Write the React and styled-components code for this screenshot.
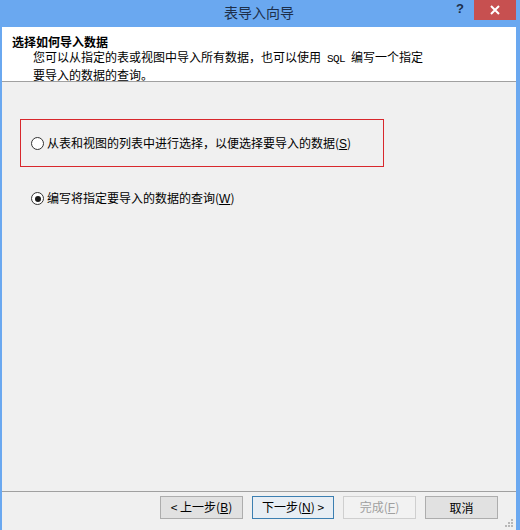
import { createGlobalStyle, styled } from "styled-components";

const Global = createGlobalStyle`
	html, body {
		margin: 0;
		padding: 0;
		background: #6aa8f0;
	}
	* {
		box-sizing: border-box;
	}
`;

const Window = styled.div`
	width: 520px;
	height: 530px;
	display: flex;
	flex-direction: column;
	background: #6aa8f0;
	padding: 0 4px 0 2px;
	font-family: "Noto Sans CJK SC", "Liberation Sans", sans-serif;
	font-size: 12px;
	color: #000;
`;

const TitleBar = styled.div`
	height: 27px;
	flex-shrink: 0;
	display: flex;
	align-items: flex-start;
	justify-content: center;
	position: relative;
	padding-top: 2px;
`;

const Title = styled.div`
	font-size: 14px;
	color: #1d2f4a;
	line-height: 20px;
`;

const Help = styled.div`
	position: absolute;
	top: 1px;
	right: 52px;
	font-family: "Liberation Sans", sans-serif;
	font-weight: bold;
	font-size: 13px;
	color: #1d2f4a;
`;

const Close = styled.div`
	position: absolute;
	top: 0;
	right: 0;
	width: 42px;
	height: 20px;
	background: #c75050;
	display: flex;
	align-items: center;
	justify-content: center;
`;

const Client = styled.div`
	flex: 1;
	display: flex;
	flex-direction: column;
	background: #f0f0f0;
`;

const Header = styled.div`
	height: 55px;
	flex-shrink: 0;
	background: #fff;
	border-bottom: 1px solid #a0a0a0;
	padding: 7px 0 0 10px;
	line-height: 15px;
`;

const HeaderTitle = styled.div`
	font-weight: bold;
`;

const HeaderText = styled.div`
	padding-left: 21px;
`;

const Mono = styled.span`
	font-family: "Liberation Mono", monospace;
	font-size: 11px;
	letter-spacing: -0.6px;
	white-space: pre;
`;

const Body = styled.div`
	flex: 1;
	padding: 37px 0 0 18px;
	display: flex;
	flex-direction: column;
	gap: 24px;
`;

const Highlight = styled.div`
	width: 364px;
	height: 48px;
	border: 1px solid #d8272c;
	display: flex;
	align-items: center;
	padding-left: 10px;
`;

const Option = styled.label`
	display: flex;
	align-items: center;
	gap: 3px;
	padding-left: ${(p) => (p.$inset ? "11px" : "0")};
	line-height: 14px;
`;

const Radio = styled.span`
	width: 13px;
	height: 13px;
	flex-shrink: 0;
	border-radius: 50%;
	border: 1px solid #333;
	background: #fff;
	display: flex;
	align-items: center;
	justify-content: center;
	&::after {
		content: "";
		width: 6px;
		height: 6px;
		border-radius: 50%;
		background: ${(p) => (p.$checked ? "#1a1a1a" : "transparent")};
	}
`;

const Key = styled.span`
	font-family: "Liberation Sans", sans-serif;
	text-decoration: underline;
`;

const Footer = styled.div`
	height: 39px;
	flex-shrink: 0;
	border-top: 1px solid #a0a0a0;
	display: flex;
	justify-content: flex-end;
	gap: 9px;
	padding: 4px 18px 0 0;
	position: relative;
`;

const Button = styled.div`
	width: ${(p) => p.$w || 73}px;
	height: 23px;
	border: 1px solid
		${(p) => (p.$disabled ? "#cfcfcf" : p.$default ? "#3c7fb1" : "#adadad")};
	background: ${(p) => (p.$disabled ? "#f2f2f2" : p.$default ? "#e8eef4" : "#e1e1e1")};
	color: ${(p) => (p.$disabled ? "#a0a0a0" : "#000")};
	display: flex;
	align-items: center;
	justify-content: center;
	line-height: 14px;
`;

const Grip = styled.svg`
	position: absolute;
	right: 2px;
	bottom: 2px;
`;

export default function App() {
	return (
		<>
			<Global />
			<Window>
				<TitleBar>
					<Title>表导入向导</Title>
					<Help>?</Help>
					<Close>
						<svg width="10" height="10" viewBox="0 0 10 10">
							<path d="M1 1L9 9M9 1L1 9" stroke="#fff" strokeWidth="2" />
						</svg>
					</Close>
				</TitleBar>
				<Client>
					<Header>
						<HeaderTitle>选择如何导入数据</HeaderTitle>
						<HeaderText>
							您可以从指定的表或视图中导入所有数据，也可以使用<Mono> SQL </Mono>编写一个指定
							<br />
							要导入的数据的查询。
						</HeaderText>
					</Header>
					<Body>
						<Highlight>
							<Option>
								<Radio />
								<span>
									从表和视图的列表中进行选择，以便选择要导入的数据(<Key>S</Key>)
								</span>
							</Option>
						</Highlight>
						<Option $inset>
							<Radio $checked />
							<span>
								编写将指定要导入的数据的查询(<Key>W</Key>)
							</span>
						</Option>
					</Body>
					<Footer>
						<Button $w={83}>
							<span>
								&lt; 上一步(<Key>B</Key>)
							</span>
						</Button>
						<Button $w={82} $default>
							<span>
								下一步(<Key>N</Key>) &gt;
							</span>
						</Button>
						<Button $disabled>
							<span>
								完成(<Key>F</Key>)
							</span>
						</Button>
						<Button>取消</Button>
						<Grip width="10" height="10" viewBox="0 0 10 10">
							<rect x="7" y="1" width="2" height="2" fill="#b8b8b8" />
							<rect x="4" y="4" width="2" height="2" fill="#b8b8b8" />
							<rect x="7" y="4" width="2" height="2" fill="#b8b8b8" />
							<rect x="1" y="7" width="2" height="2" fill="#b8b8b8" />
							<rect x="4" y="7" width="2" height="2" fill="#b8b8b8" />
							<rect x="7" y="7" width="2" height="2" fill="#b8b8b8" />
						</Grip>
					</Footer>
				</Client>
			</Window>
		</>
	);
}
